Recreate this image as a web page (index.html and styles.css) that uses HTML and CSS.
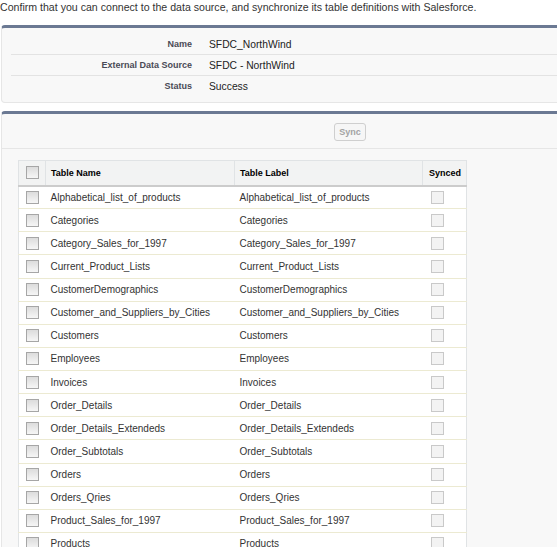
FILE: index.html
```html
<!DOCTYPE html>
<html>
<head>
<meta charset="utf-8">
<link rel="stylesheet" href="styles.css">
</head>
<body>
<div class="page">
  <p class="intro">Confirm that you can connect to the data source, and synchronize its table definitions with Salesforce.</p>

  <div class="panel info">
    <div class="info-row"><div class="lbl">Name</div><div class="val">SFDC_NorthWind</div></div>
    <div class="info-row"><div class="lbl">External Data Source</div><div class="val">SFDC - NorthWind</div></div>
    <div class="info-row last"><div class="lbl">Status</div><div class="val">Success</div></div>
  </div>

  <div class="panel tables">
    <div class="btn-row"><button class="btn" disabled>Sync</button></div>
    <div class="table-wrap">
      <table class="list">
        <thead>
          <tr>
            <th class="c-check"><input type="checkbox" class="cb"></th>
            <th class="c-name">Table Name</th>
            <th class="c-label">Table Label</th>
            <th class="c-sync">Synced</th>
          </tr>
        </thead>
        <tbody>
          <tr><td class="c-check"><input type="checkbox" class="cb"></td><td>Alphabetical_list_of_products</td><td>Alphabetical_list_of_products</td><td class="c-sync"><input type="checkbox" class="cb dis" disabled></td></tr>
          <tr><td class="c-check"><input type="checkbox" class="cb"></td><td>Categories</td><td>Categories</td><td class="c-sync"><input type="checkbox" class="cb dis" disabled></td></tr>
          <tr><td class="c-check"><input type="checkbox" class="cb"></td><td>Category_Sales_for_1997</td><td>Category_Sales_for_1997</td><td class="c-sync"><input type="checkbox" class="cb dis" disabled></td></tr>
          <tr><td class="c-check"><input type="checkbox" class="cb"></td><td>Current_Product_Lists</td><td>Current_Product_Lists</td><td class="c-sync"><input type="checkbox" class="cb dis" disabled></td></tr>
          <tr><td class="c-check"><input type="checkbox" class="cb"></td><td>CustomerDemographics</td><td>CustomerDemographics</td><td class="c-sync"><input type="checkbox" class="cb dis" disabled></td></tr>
          <tr><td class="c-check"><input type="checkbox" class="cb"></td><td>Customer_and_Suppliers_by_Cities</td><td>Customer_and_Suppliers_by_Cities</td><td class="c-sync"><input type="checkbox" class="cb dis" disabled></td></tr>
          <tr><td class="c-check"><input type="checkbox" class="cb"></td><td>Customers</td><td>Customers</td><td class="c-sync"><input type="checkbox" class="cb dis" disabled></td></tr>
          <tr><td class="c-check"><input type="checkbox" class="cb"></td><td>Employees</td><td>Employees</td><td class="c-sync"><input type="checkbox" class="cb dis" disabled></td></tr>
          <tr><td class="c-check"><input type="checkbox" class="cb"></td><td>Invoices</td><td>Invoices</td><td class="c-sync"><input type="checkbox" class="cb dis" disabled></td></tr>
          <tr><td class="c-check"><input type="checkbox" class="cb"></td><td>Order_Details</td><td>Order_Details</td><td class="c-sync"><input type="checkbox" class="cb dis" disabled></td></tr>
          <tr><td class="c-check"><input type="checkbox" class="cb"></td><td>Order_Details_Extendeds</td><td>Order_Details_Extendeds</td><td class="c-sync"><input type="checkbox" class="cb dis" disabled></td></tr>
          <tr><td class="c-check"><input type="checkbox" class="cb"></td><td>Order_Subtotals</td><td>Order_Subtotals</td><td class="c-sync"><input type="checkbox" class="cb dis" disabled></td></tr>
          <tr><td class="c-check"><input type="checkbox" class="cb"></td><td>Orders</td><td>Orders</td><td class="c-sync"><input type="checkbox" class="cb dis" disabled></td></tr>
          <tr><td class="c-check"><input type="checkbox" class="cb"></td><td>Orders_Qries</td><td>Orders_Qries</td><td class="c-sync"><input type="checkbox" class="cb dis" disabled></td></tr>
          <tr><td class="c-check"><input type="checkbox" class="cb"></td><td>Product_Sales_for_1997</td><td>Product_Sales_for_1997</td><td class="c-sync"><input type="checkbox" class="cb dis" disabled></td></tr>
          <tr><td class="c-check"><input type="checkbox" class="cb"></td><td>Products</td><td>Products</td><td class="c-sync"><input type="checkbox" class="cb dis" disabled></td></tr>
        </tbody>
      </table>
    </div>
  </div>
</div>
</body>
</html>
```

FILE: styles.css
```css
html, body {
  margin: 0;
  padding: 0;
  background: #ffffff;
}
body {
  font-family: "Liberation Sans", Arial, sans-serif;
  font-size: 10px;
  color: #222222;
}
.page {
  width: 557px;
  height: 547px;
  overflow: hidden;
}
.intro {
  margin: 0;
  height: 15px;
  line-height: 15px;
  font-size: 10.6px;
  color: #333333;
  white-space: nowrap;
}
.panel {
  width: 580px;
  margin-left: 1px;
  background: #f8f8f8;
  border: 1px solid #e6e6e6;
  border-top: 3px solid #6b7993;
  border-radius: 4px;
  box-sizing: border-box;
}
.info {
  margin-top: 10px;
  padding: 6px 0 6px 9px;
  height: 78px;
}
.info-row {
  display: flex;
  height: 20px;
  align-items: center;
  border-bottom: 1px solid #e3e3e3;
}
.info-row.last {
  border-bottom: none;
}
.lbl {
  width: 181px;
  text-align: right;
  font-weight: bold;
  font-size: 9px;
  color: #4a4a56;
}
.val {
  padding-left: 17px;
  font-size: 10.3px;
  color: #222222;
}
.tables {
  margin-top: 8px;
  height: 600px;
}
.btn-row {
  height: 35px;
  border-bottom: 1px solid #e6e6e6;
  padding-left: 332px;
  padding-top: 9px;
  box-sizing: border-box;
}
.btn {
  width: 32px;
  height: 18px;
  padding: 0;
  font-family: "Liberation Sans", Arial, sans-serif;
  font-size: 9px;
  font-weight: bold;
  color: #a3a3a3;
  background: #f6f6f6;
  border: 1px solid #cfcfcf;
  border-radius: 3px;
}
.table-wrap {
  padding: 11px 0 0 16px;
}
.list {
  border-collapse: collapse;
  background: #ffffff;
  border: 1px solid #e0e3e5;
  width: 448px;
  table-layout: fixed;
}
.list th,
.list td {
  box-sizing: border-box;
}
.list th {
  height: 25px;
  background: #f2f3f3;
  border-bottom: 2px solid #cccccc;
  border-left: 1px solid #e0e3e5;
  text-align: left;
  font-size: 9px;
  font-weight: bold;
  color: #000000;
  padding: 0 5px;
}
.list td {
  height: 23.13px;
  border-bottom: 1px solid #ecead2;
  padding: 0 5px;
  font-size: 10px;
  color: #333333;
  white-space: nowrap;
  overflow: hidden;
}
.list .c-check {
  width: 27px;
  padding: 0 0 0 7px;
}
.list .c-name {
  width: 189px;
}
.list .c-label {
  width: 188px;
}
.list th.c-sync {
  width: 44px;
  padding: 0 0 0 6px;
}
.list td.c-sync {
  padding: 0 0 0 8px;
}
.cb {
  appearance: none;
  -webkit-appearance: none;
  display: block;
  width: 13px;
  height: 13px;
  margin: 0;
  border: 1px solid #a6a6a6;
  background: linear-gradient(#dcdcdc, #f6f6f6);
  box-sizing: border-box;
}
.cb.dis {
  border-color: #c9c9c9;
  background: #f3f3f3;
}
```
